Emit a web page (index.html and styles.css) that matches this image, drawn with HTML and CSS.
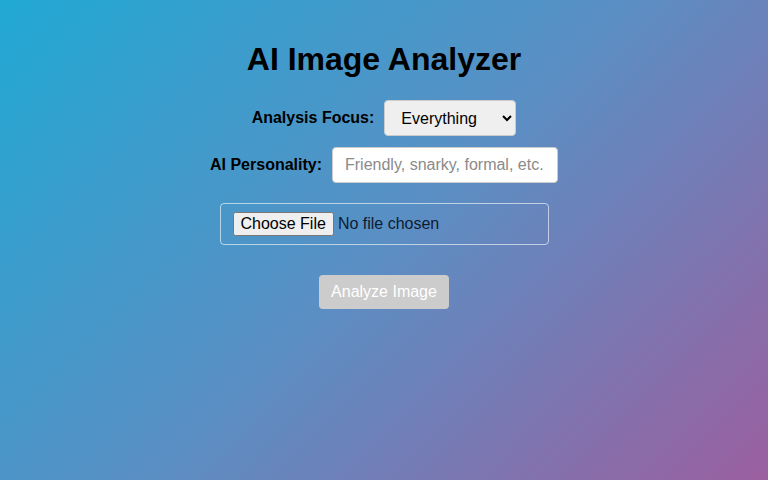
FILE: index.html
```html
<!DOCTYPE html>
<html lang="en">
<head>
<meta charset="utf-8">
<title>AI Image Analyzer</title>
<link rel="stylesheet" href="styles.css">
</head>
<body>
<main class="app">
  <h1 class="title">AI Image Analyzer</h1>
  <div class="row">
    <label class="label" for="focus">Analysis Focus:</label>
    <select id="focus" class="select">
      <option>Everything</option>
    </select>
  </div>
  <div class="row">
    <label class="label" for="persona">AI Personality:</label>
    <input id="persona" class="text-input" type="text" placeholder="Friendly, snarky, formal, etc.">
  </div>
  <div class="file-box">
    <input class="file-input" type="file">
  </div>
  <button class="analyze" disabled>Analyze Image</button>
</main>
</body>
</html>
```
FILE: styles.css
```css
html, body {
  margin: 0;
  height: 100%;
}
body {
  background: linear-gradient(135deg, #21a9d4 0%, #5a8fc4 50%, #9b5f9f 100%);
  font-family: "Liberation Sans", Arial, sans-serif;
  color: #000;
}
.app {
  display: flex;
  flex-direction: column;
  align-items: center;
  padding-top: 41px;
}
.title {
  font-size: 32px;
  font-weight: bold;
  margin: 0 0 22px;
  line-height: 37px;
}
.row {
  display: flex;
  align-items: center;
  gap: 10px;
  margin-bottom: 11px;
}
.label {
  font-size: 16px;
  font-weight: bold;
}
.select {
  font-family: "Liberation Sans", Arial, sans-serif;
  font-size: 16px;
  height: 36px;
  padding: 0 8px 0 12px;
  border: 1px solid #ccc;
  border-radius: 4px;
  background: #efefef;
  color: #000;
  width: 132px;
}
.text-input {
  font-family: "Liberation Sans", Arial, sans-serif;
  font-size: 16px;
  height: 36px;
  box-sizing: border-box;
  width: 226px;
  padding: 0 12px;
  border: 1px solid #ccc;
  border-radius: 4px;
  background: #fff;
}
.text-input::placeholder {
  color: #8a8a8a;
}
.file-box {
  margin-top: 9px;
  box-sizing: border-box;
  width: 329px;
  height: 42px;
  border: 1px solid rgba(255,255,255,0.6);
  border-radius: 4px;
  padding: 0 12px;
  display: flex;
  align-items: center;
}
.file-input {
  font-family: "Liberation Sans", Arial, sans-serif;
  font-size: 16px;
  color: #0d1b33;
}
.analyze {
  margin-top: 30px;
  font-family: "Liberation Sans", Arial, sans-serif;
  font-size: 16px;
  height: 34px;
  width: 130px;
  border: none;
  border-radius: 4px;
  background: #cccccc;
  color: #fff;
}
```
